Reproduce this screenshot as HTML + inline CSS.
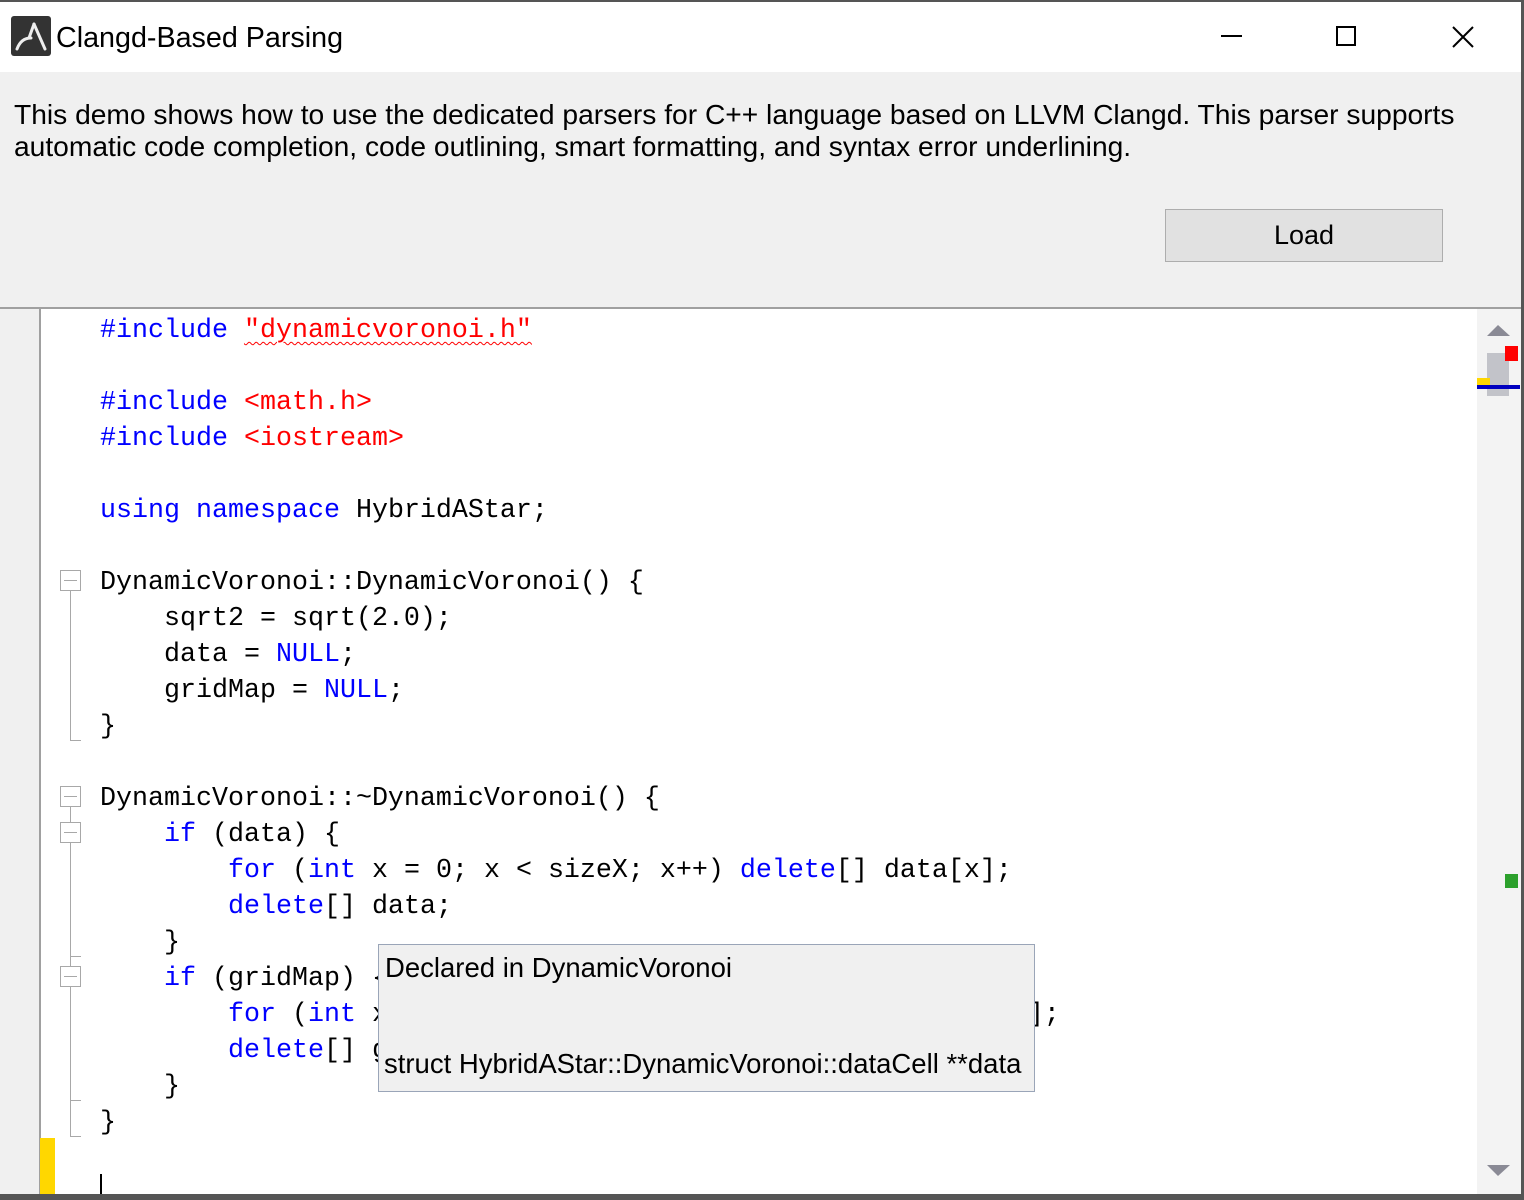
<!DOCTYPE html>
<html><head><meta charset="utf-8">
<style>
*{margin:0;padding:0;box-sizing:border-box}
body{width:1524px;height:1200px;overflow:hidden;background:#fff;position:relative;font-family:"Liberation Sans",sans-serif}
.abs{position:absolute}
.code{position:absolute;left:100px;font-family:"Liberation Mono",monospace;font-size:26.67px;line-height:36px;white-space:pre;color:#000;height:36px}
.b{color:#0000ff}.r{color:#ff0000}
.fold{position:absolute;left:60px;width:21px;height:21px;border:1px solid #a8a8a8;background:#fff}
.fold:after{content:"";position:absolute;left:3px;right:3px;top:9px;height:1px;background:#a8a8a8}
.vl{position:absolute;left:70px;width:1px;background:#a8a8a8}
.hl{position:absolute;left:70px;width:11px;height:1px;background:#a8a8a8}
</style></head><body>
<div class="abs" style="left:0;top:0;width:1524px;height:2px;background:#555"></div>
<div class="abs" style="left:1521px;top:0;width:3px;height:1200px;background:#555"></div>
<div class="abs" style="left:0;top:1194px;width:1524px;height:6px;background:#555"></div>
<div class="abs" style="left:0;top:2px;width:1521px;height:70px;background:#fff"></div>
<svg class="abs" style="left:11px;top:16px" width="40" height="40"><rect width="40" height="40" rx="3" fill="#333"/><path d="M6 33 Q10 22 20 22" stroke="#eee" stroke-width="3" fill="none" stroke-linecap="round"/><path d="M23 8 L34 33" stroke="#eee" stroke-width="3" fill="none" stroke-linecap="round"/><path d="M23 8 L18 22" stroke="#eee" stroke-width="3" fill="none" stroke-linecap="round"/></svg>
<div class="abs" style="left:56px;top:18px;font-size:28.7px;line-height:40px;color:#000">Clangd-Based Parsing</div>
<div class="abs" style="left:1221px;top:35px;width:21px;height:2px;background:#000"></div>
<div class="abs" style="left:1336px;top:26px;width:20px;height:20px;border:2px solid #000"></div>
<svg class="abs" style="left:1452px;top:26px" width="22" height="22"><path d="M1 1L21 21M21 1L1 21" stroke="#000" stroke-width="2"/></svg>
<div class="abs" style="left:0;top:72px;width:1521px;height:236px;background:#f0f0f0"></div>
<div class="abs" style="left:14px;top:98px;font-size:28.2px;line-height:32px;color:#000;width:1470px">This demo shows how to use the dedicated parsers for C++ language based on LLVM Clangd. This parser supports automatic code completion, code outlining, smart formatting, and syntax error underlining.</div>
<div class="abs" style="left:1165px;top:209px;width:278px;height:53px;background:#e1e1e1;border:1px solid #adadad;font-size:27px;line-height:51px;text-align:center;color:#000">Load</div>
<div class="abs" style="left:0;top:307px;width:1521px;height:2px;background:#a0a0a0"></div>
<div class="abs" style="left:0;top:309px;width:39px;height:885px;background:#f0f0f0"></div>
<div class="abs" style="left:39px;top:309px;width:2px;height:885px;background:#a0a0a0"></div>
<div class="abs" style="left:40px;top:1138px;width:15px;height:56px;background:#ffd700"></div>
<div class="abs" style="left:1477px;top:309px;width:44px;height:885px;background:#f3f3f3"></div>
<svg class="abs" style="left:1487px;top:325px" width="24" height="12"><path d="M0 11L11 0L23 11Z" fill="#8a8a95"/></svg>
<svg class="abs" style="left:1487px;top:1165px" width="24" height="12"><path d="M0 0L23 0L11 11Z" fill="#8a8a95"/></svg>
<div class="abs" style="left:1487px;top:353px;width:22px;height:43px;background:#c2c3c9"></div>
<div class="abs" style="left:1505px;top:346px;width:13px;height:15px;background:#ff0000"></div>
<div class="abs" style="left:1477px;top:378px;width:13px;height:7px;background:#ffd700"></div>
<div class="abs" style="left:1477px;top:385px;width:43px;height:4px;background:#0000c0"></div>
<div class="abs" style="left:1505px;top:874px;width:13px;height:14px;background:#2ca02c"></div>
<div class="vl" style="top:591px;height:149px"></div><div class="hl" style="top:740px"></div>
<div class="vl" style="top:807px;height:329px"></div><div class="hl" style="top:1136px"></div>
<div class="hl" style="top:956px"></div><div class="hl" style="top:1100px"></div>
<div class="fold" style="top:570px"></div>
<div class="fold" style="top:786px"></div>
<div class="fold" style="top:822px"></div>
<div class="fold" style="top:966px"></div>
<div class="code" style="top:313px"><span class="b">#include</span> <span class="r" style="text-decoration:underline wavy #ff0000;text-underline-offset:4px;text-decoration-thickness:1px">"dynamicvoronoi.h"</span></div>
<div class="code" style="top:385px"><span class="b">#include</span> <span class="r">&lt;math.h&gt;</span></div>
<div class="code" style="top:421px"><span class="b">#include</span> <span class="r">&lt;iostream&gt;</span></div>
<div class="code" style="top:493px"><span class="b">using</span> <span class="b">namespace</span> HybridAStar;</div>
<div class="code" style="top:565px">DynamicVoronoi::DynamicVoronoi() {</div>
<div class="code" style="top:601px">    sqrt2 = sqrt(2.0);</div>
<div class="code" style="top:637px">    data = <span class="b">NULL</span>;</div>
<div class="code" style="top:673px">    gridMap = <span class="b">NULL</span>;</div>
<div class="code" style="top:709px">}</div>
<div class="code" style="top:781px">DynamicVoronoi::~DynamicVoronoi() {</div>
<div class="code" style="top:817px">    <span class="b">if</span> (data) {</div>
<div class="code" style="top:853px">        <span class="b">for</span> (<span class="b">int</span> x = 0; x &lt; sizeX; x++) <span class="b">delete</span>[] data[x];</div>
<div class="code" style="top:889px">        <span class="b">delete</span>[] data;</div>
<div class="code" style="top:925px">    }</div>
<div class="code" style="top:961px">    <span class="b">if</span> (gridMap) {</div>
<div class="code" style="top:997px">        <span class="b">for</span> (<span class="b">int</span> x = 0; x &lt; sizeX; x++) <span class="b">delete</span>[] gridMap[x];</div>
<div class="code" style="top:1033px">        <span class="b">delete</span>[] gridMap;</div>
<div class="code" style="top:1069px">    }</div>
<div class="code" style="top:1105px">}</div>
<div class="abs" style="left:100px;top:1174px;width:2px;height:20px;background:#000"></div>
<div class="abs" style="left:378px;top:944px;width:657px;height:148px;background:#f0f0f0;border:1px solid #9aa5b8"></div>
<div class="abs" style="left:385px;top:950px;font-size:27.5px;line-height:36px;color:#000;white-space:nowrap">Declared in DynamicVoronoi</div>
<div class="abs" style="left:384px;top:1046px;font-size:27.5px;line-height:36px;color:#000;white-space:nowrap">struct HybridAStar::DynamicVoronoi::dataCell **data</div>
</body></html>
